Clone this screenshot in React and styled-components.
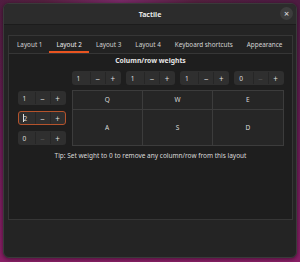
import styled, { createGlobalStyle } from 'styled-components';

const GlobalStyle = createGlobalStyle`
    html, body {
        margin: 0;
        padding: 0;
        width: 300px;
        height: 262px;
        overflow: hidden;
        background: radial-gradient(ellipse at 40% 0%, #7a2a68 0%, #55203f 30%, transparent 55%),
            linear-gradient(180deg, #4f1c42 0%, #6e1d58 55%, #8a1f66 100%);
        font-family: "Noto Sans", "Open Sans", sans-serif;
        color: #dcdcdc;
    }
`

const weightsTop = [1, 1, 1, 0]
const weightsLeft = [1, 2, 0]
const keys = [['Q', 'W', 'E'], ['A', 'S', 'D']]
const tabs = ['Layout 1', 'Layout 2', 'Layout 3', 'Layout 4', 'Keyboard shortcuts', 'Appearance']

const SpinButton = ({ value, focused }) => (
    <Spin $focused={focused}>
        <SpinValue>
            {focused && <Caret />}
            {value}
        </SpinValue>
        <SpinBtn $disabled={value === 0}>−</SpinBtn>
        <SpinBtn>+</SpinBtn>
    </Spin>
)

const App = () => {
    const rowHeights = weightsLeft.filter(w => w > 0)
    const cols = weightsTop.filter(w => w > 0)

    return (
        <>
            <GlobalStyle />
            <Window>
                <HeaderBar>
                    <Title>Tactile</Title>
                    <CloseButton>×</CloseButton>
                </HeaderBar>
                <Content>
                    <Frame>
                        <TabBar>
                            {tabs.map((t, i) => (
                                <Tab key={t} $active={i === 1}>{t}</Tab>
                            ))}
                        </TabBar>
                        <Page>
                            <Heading>Column/row weights</Heading>
                            <Editor>
                                <span />
                                <TopSpins>
                                    {weightsTop.map((w, i) => (
                                        <SpinButton key={i} value={w} />
                                    ))}
                                </TopSpins>
                                <LeftSpins>
                                    {weightsLeft.map((w, i) => (
                                        <SpinButton key={i} value={w} focused={i === 1} />
                                    ))}
                                </LeftSpins>
                                <KeyGrid
                                    style={{
                                        gridTemplateColumns: cols.map(c => `${c}fr`).join(' '),
                                        gridTemplateRows: rowHeights.map(r => `${r}fr`).join(' '),
                                    }}
                                >
                                    {keys.flat().map(k => (
                                        <Cell key={k}>{k}</Cell>
                                    ))}
                                </KeyGrid>
                            </Editor>
                            <Tip>Tip: Set weight to 0 to remove any column/row from this layout</Tip>
                        </Page>
                    </Frame>
                </Content>
            </Window>
        </>
    )
}

export default App;


const Window = styled.div`
    position: relative;
    margin: 3px 3px 0 3px;
    width: 294px;
    height: 255px;
    box-sizing: border-box;
    border-radius: 6px;
    background: #242424;
    border: 1px solid #3a3a3a;
    box-shadow: 0 1px 4px rgba(0, 0, 0, 0.5);
    overflow: hidden;
    display: flex;
    flex-direction: column;
`

const HeaderBar = styled.div`
    height: 20px;
    flex: none;
    display: flex;
    align-items: center;
    justify-content: center;
    background: #2c2c2c;
    border-bottom: 1px solid #1c1c1c;
    position: relative;
`

const Title = styled.div`
    font-size: 7px;
    font-weight: 700;
    color: #e6e6e6;
`

const CloseButton = styled.div`
    position: absolute;
    right: 3px;
    top: 3px;
    width: 13px;
    height: 13px;
    border-radius: 50%;
    background: #3d3d3d;
    color: #e0e0e0;
    font-size: 9px;
    line-height: 13px;
    text-align: center;
`

const Content = styled.div`
    padding: 10px 3px 37px 4px;
    flex: 1;
    display: flex;
`

const Frame = styled.div`
    flex: 1;
    border: 1px solid #363636;
    background: #1e1e1e;
    display: flex;
    flex-direction: column;
`

const TabBar = styled.div`
    display: flex;
    height: 17px;
    padding-left: 1px;
    border-bottom: 1px solid #363636;
    background: #222222;
`

const Tab = styled.div`
    padding: 0 7px;
    font-size: 6.35px;
    line-height: 17px;
    white-space: nowrap;
    color: ${p => (p.$active ? '#ececec' : '#d4d4d4')};
    box-shadow: ${p => (p.$active ? 'inset 0 -2px 0 #e95420' : 'none')};
`

const Page = styled.div`
    display: flex;
    flex-direction: column;
    align-items: center;
`

const Heading = styled.div`
    margin-top: 2px;
    font-size: 6.8px;
    font-weight: 700;
    line-height: 10px;
    color: #e6e6e6;
`

const Editor = styled.div`
    margin-top: 5px;
    display: grid;
    grid-template-columns: 48px 212px;
    grid-template-rows: 14px 56px;
    column-gap: 6px;
    row-gap: 5px;
`

const TopSpins = styled.div`
    display: grid;
    grid-template-columns: repeat(4, 1fr);
    column-gap: 5px;
`

const LeftSpins = styled.div`
    display: flex;
    flex-direction: column;
    gap: 6px;
    padding-top: 1px;
`

const Spin = styled.div`
    display: flex;
    height: 14px;
    box-sizing: border-box;
    border-radius: 3px;
    background: #2f2f2f;
    border: 1px solid ${p => (p.$focused ? '#b5532c' : 'transparent')};
    font-size: 6.5px;
    color: #dedede;
`

const SpinValue = styled.div`
    flex: 1;
    display: flex;
    align-items: center;
    padding-left: 4px;
`

const Caret = styled.span`
    display: inline-block;
    width: 1px;
    height: 8px;
    background: #e0e0e0;
`

const SpinBtn = styled.div`
    width: 14px;
    display: flex;
    align-items: center;
    justify-content: center;
    border-left: 1px solid #262626;
    font-size: 8px;
    color: ${p => (p.$disabled ? '#5a5a5a' : '#dedede')};
`

const KeyGrid = styled.div`
    display: grid;
    border: 1px solid #3c3c3c;
    background: #3c3c3c;
    gap: 1px;
`

const Cell = styled.div`
    background: #262626;
    display: flex;
    align-items: center;
    justify-content: center;
    font-size: 6.5px;
    color: #dcdcdc;
`

const Tip = styled.div`
    margin-top: 5px;
    font-size: 6.5px;
    line-height: 10px;
    color: #dadada;
`
